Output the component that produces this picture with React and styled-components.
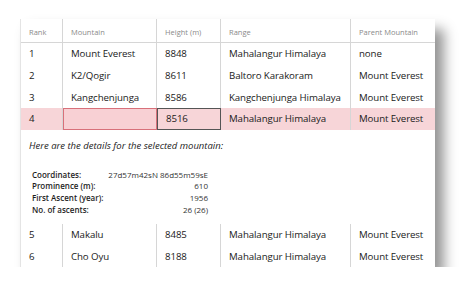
import React from "react";
import styled, { createGlobalStyle } from "styled-components";

const GlobalStyle = createGlobalStyle`
  body {
    margin: 0;
    background: #ffffff;
    font-family: "Open Sans", "Noto Sans", sans-serif;
  }
`;

const mountains = [
  { rank: 1, name: "Mount Everest", height: 8848, range: "Mahalangur Himalaya", parent: "none" },
  { rank: 2, name: "K2/Qogir", height: 8611, range: "Baltoro Karakoram", parent: "Mount Everest" },
  { rank: 3, name: "Kangchenjunga", height: 8586, range: "Kangchenjunga Himalaya", parent: "Mount Everest" },
  { rank: 4, name: "", height: 8516, range: "Mahalangur Himalaya", parent: "Mount Everest", selected: true },
  { rank: 5, name: "Makalu", height: 8485, range: "Mahalangur Himalaya", parent: "Mount Everest" },
  { rank: 6, name: "Cho Oyu", height: 8188, range: "Mahalangur Himalaya", parent: "Mount Everest" },
];

const details = [
  ["Coordinates:", "27d57m42sN 86d55m59sE"],
  ["Prominence (m):", "610"],
  ["First Ascent (year):", "1956"],
  ["No. of ascents:", "26 (26)"],
];

const Page = styled.div`
  padding: 19px 0 0 20px;
`;

const Grid = styled.div`
  width: 415px;
  background: #fff;
  border-left: 1px solid #e4e4e4;
  box-sizing: border-box;
  box-shadow: 9px 10px 12px rgba(0, 0, 0, 0.42);
  display: grid;
  grid-template-columns: 42px 94px 64px 130px 84px;
`;

const Row = styled.div`
  display: contents;
`;

const HeadCell = styled.div`
  height: 24px;
  display: flex;
  align-items: center;
  padding: 2px 0 0 8px;
  font-size: 7.5px;
  color: #8a8a8a;
  border-bottom: 1px solid #d6d6d6;
  border-right: ${(p) => (p.last ? "none" : "1px solid #d6d6d6")};
  box-sizing: border-box;
`;

const Cell = styled.div`
  height: 21.7px;
  display: flex;
  align-items: center;
  padding-left: 8px;
  font-size: 9.7px;
  letter-spacing: -0.1px;
  color: #1a1a1a;
  white-space: nowrap;
  box-sizing: border-box;
  background: ${(p) => (p.selected ? "#f7d5d8" : "transparent")};
  border-right: ${(p) => (p.last ? "none" : "1px solid #d6d6d6")};
  ${(p) =>
    p.editing &&
    `
    border: 1px solid #d8707a;
    background: #f8d0d4;
  `}
  ${(p) =>
    p.focused &&
    `
    border: 1px solid #555555;
  `}
`;

const Details = styled.div`
  grid-column: 1 / -1;
  height: 94px;
  padding: 9px 0 0 8px;
  box-sizing: border-box;
`;

const Intro = styled.div`
  font-style: italic;
  font-size: 9.5px;
  color: #222;
`;

const Facts = styled.div`
  margin-top: 17px;
  margin-left: 3px;
  width: 176px;
  display: grid;
  grid-template-columns: auto 1fr;
`;

const Label = styled.div`
  font-size: 8px;
  font-weight: 600;
  color: #1e1e1e;
  line-height: 11.7px;
`;

const Value = styled.div`
  font-size: 8px;
  color: #333;
  text-align: right;
  line-height: 11.7px;
`;

const MountainRow = ({ m }) => (
  <Row>
    <Cell selected={m.selected}>{m.rank}</Cell>
    <Cell selected={m.selected} editing={m.selected}>{m.name}</Cell>
    <Cell selected={m.selected} focused={m.selected}>{m.height}</Cell>
    <Cell selected={m.selected}>{m.range}</Cell>
    <Cell selected={m.selected} last>{m.parent}</Cell>
  </Row>
);

export default function App() {
  return (
    <Page>
      <GlobalStyle />
      <Grid>
        <Row>
          <HeadCell>Rank</HeadCell>
          <HeadCell>Mountain</HeadCell>
          <HeadCell>Height (m)</HeadCell>
          <HeadCell>Range</HeadCell>
          <HeadCell last>Parent Mountain</HeadCell>
        </Row>
        {mountains.slice(0, 4).map((m) => (
          <MountainRow key={m.rank} m={m} />
        ))}
        <Details>
          <Intro>Here are the details for the selected mountain:</Intro>
          <Facts>
            {details.map(([k, v]) => (
              <React.Fragment key={k}>
                <Label>{k}</Label>
                <Value>{v}</Value>
              </React.Fragment>
            ))}
          </Facts>
        </Details>
        {mountains.slice(4).map((m) => (
          <MountainRow key={m.rank} m={m} />
        ))}
      </Grid>
    </Page>
  );
}
